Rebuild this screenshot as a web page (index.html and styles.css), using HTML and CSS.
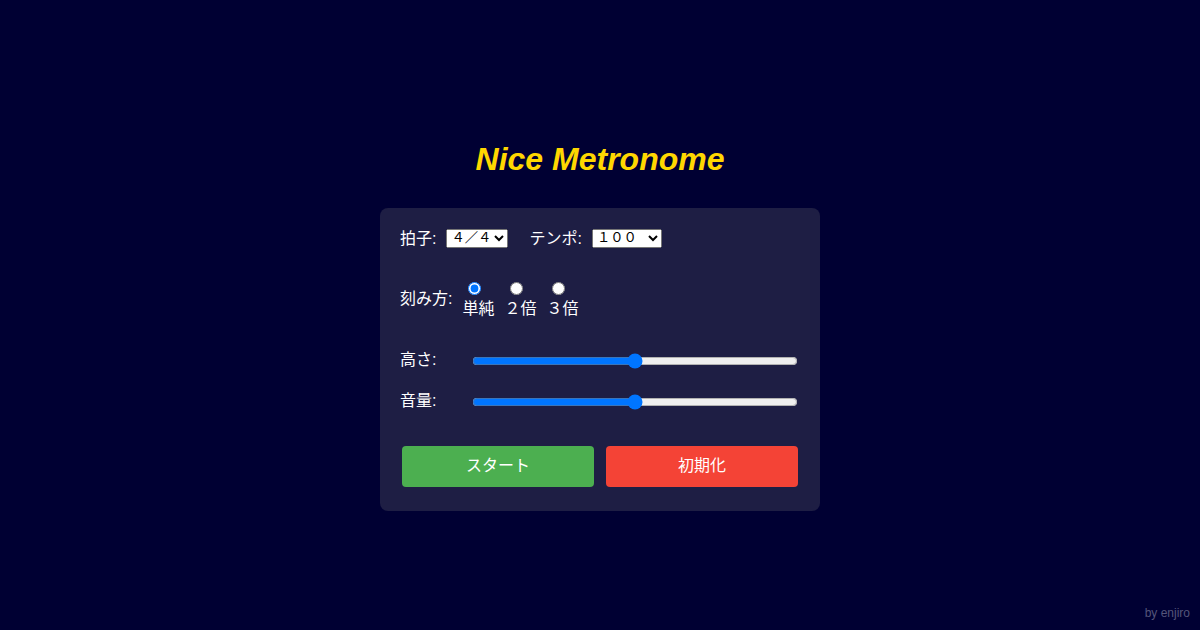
FILE: index.html
```html
<!DOCTYPE html>
<html lang="ja">
<head>
<meta charset="utf-8">
<title>Nice Metronome</title>
<link rel="stylesheet" href="styles.css">
</head>
<body>
<main class="page">
  <h1 class="title">Nice Metronome</h1>
  <section class="card">
    <div class="row row-top">
      <label class="lbl">拍子:</label>
      <select class="sel sel-beat"><option>４／４</option></select>
      <label class="lbl lbl-tempo">テンポ:</label>
      <select class="sel sel-tempo"><option>１００</option></select>
    </div>
    <div class="row row-radio">
      <span class="lbl lbl-radio">刻み方:</span>
      <label class="opt"><input type="radio" name="k" checked><br>単純</label>
      <label class="opt"><input type="radio" name="k"><br>２倍</label>
      <label class="opt"><input type="radio" name="k"><br>３倍</label>
    </div>
    <div class="row row-slider">
      <span class="lbl lbl-fixed">高さ:</span>
      <input class="range" type="range" min="0" max="100" value="50">
    </div>
    <div class="row row-slider">
      <span class="lbl lbl-fixed">音量:</span>
      <input class="range" type="range" min="0" max="100" value="50">
    </div>
    <div class="buttons">
      <button class="btn btn-start">スタート</button>
      <button class="btn btn-reset">初期化</button>
    </div>
  </section>
</main>
<footer class="credit">by enjiro</footer>
</body>
</html>
```
FILE: styles.css
```css
html, body {
  margin: 0;
  padding: 0;
}
body {
  background: #000033;
  color: #ffffff;
  font-family: "Liberation Sans", Arial, "Noto Sans CJK JP", sans-serif;
  height: 630px;
  display: flex;
  flex-direction: column;
}
.page {
  flex: 1;
  display: flex;
  flex-direction: column;
  align-items: center;
  padding-top: 141px;
}
.title {
  margin: 0 0 30px;
  font-size: 32px;
  line-height: 37px;
  font-style: italic;
  font-weight: bold;
  color: #ffd700;
}
.card {
  width: 400px;
  padding: 20px 20px 24px;
  background: #1e1e44;
  border-radius: 8px;
}
.row {
  display: flex;
  align-items: center;
}
.row-top {
  height: 20px;
}
.row-top .lbl {
  margin-bottom: 2px;
}
.lbl {
  font-size: 16px;
}
.sel {
  margin-left: 10px;
  font-size: 13.333px;
  font-family: "Liberation Mono", "Noto Sans CJK JP", monospace;
}
.sel-beat { width: 62px; }
.sel-tempo { width: 70px; }
.row-top .lbl-tempo {
  margin-left: 21px;
}
.row-radio {
  margin-top: 31px;
}
.lbl-radio {
  margin-bottom: 4px;
}
.opt {
  display: inline-block;
  margin-left: 10px;
  font-size: 16px;
  line-height: 19px;
}
.opt input {
  margin: 3px 3px 0 6px;
}
.row-slider {
  height: 20px;
  margin-top: 33px;
}
.row-slider + .row-slider {
  margin-top: 21px;
}
.lbl-fixed {
  width: 70px;
  margin-bottom: 6px;
}
.range {
  flex: 1;
  margin: 2px;
}
.buttons {
  display: flex;
  gap: 12px;
  padding: 0 2px;
  margin-top: 34px;
}
.btn {
  flex: 1;
  height: 41px;
  padding: 0 0 6px;
  border: none;
  border-radius: 4px;
  color: #ffffff;
  font-size: 16px;
  font-family: "Liberation Sans", Arial, "Noto Sans CJK JP", sans-serif;
}
.btn-start { background: #4caf50; }
.btn-reset { background: #f44336; }
.credit {
  text-align: right;
  padding: 0 10px 10px 0;
  font-size: 12px;
  color: #55557a;
}
```
